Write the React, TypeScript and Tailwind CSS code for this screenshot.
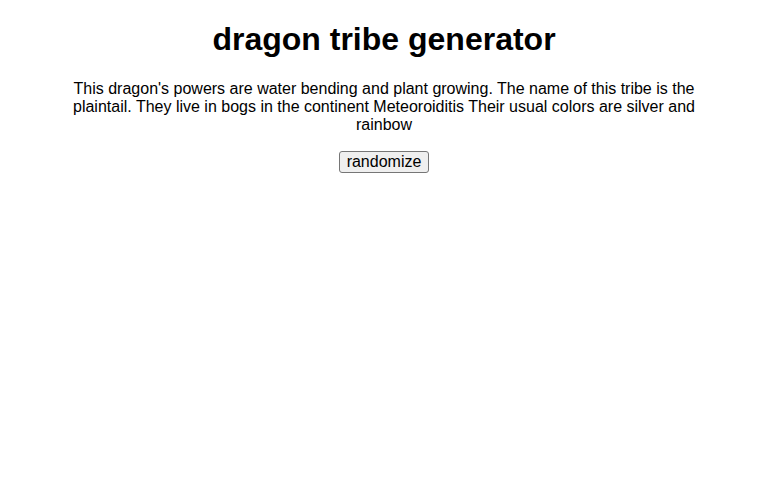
import { useState } from 'react'

const description =
  "This dragon's powers are water bending and plant growing. The name of this tribe is the plaintail. They live in bogs in the continent Meteoroiditis Their usual colors are silver and rainbow"

const App = () => {
  const [text] = useState(description)

  return (
    <div className="m-2 text-center text-black font-['Liberation_Sans',Arial,sans-serif]">
      <h1 className="pt-[13.44px] text-[32px] leading-[36.8px] font-bold">
        dragon tribe generator
      </h1>
      <p className="mx-auto mt-[21.44px] max-w-[640px] text-base leading-[18.4px]">
        {text}
      </p>
      <button className="mt-4 px-[7px] py-[1px] text-base leading-[18.4px] bg-[#efefef] border border-[#767676] rounded-[3px]">
        randomize
      </button>
    </div>
  )
}

export default App
